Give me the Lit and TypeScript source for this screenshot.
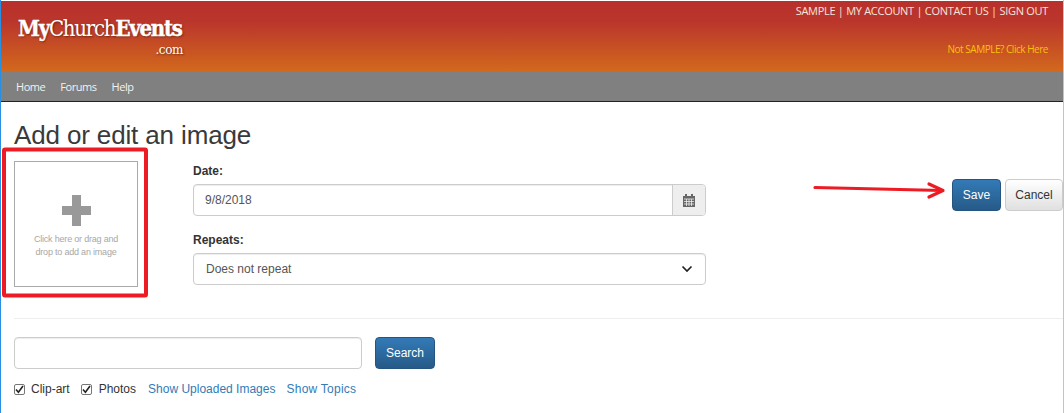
import { LitElement, html, css } from "lit";
import { customElement } from "lit/decorators.js";

@customElement("app-root")
export class AppRoot extends LitElement {
  static styles = css`
    :host { display: block; position: relative; width: 1064px; height: 413px; overflow: hidden; background: #fff; font-family: "Liberation Sans", Arial, sans-serif; color: #333; box-sizing: border-box; border-left: 1px solid #2a8fe0; border-right: 1px solid #c4c4c4; }
    * { box-sizing: border-box; }
    .top { height: 70px; margin-top: 1px; background: linear-gradient(#b8302c 0%, #ba362b 30%, #d2681d 100%); display: flex; justify-content: space-between; padding: 0 15px 0 17px; }
    .logo { padding-top: 16px; color: #fff; font-family: "DejaVu Serif", serif; line-height: 1; width: 166px; text-shadow: 1px 1px 2px rgba(60,20,0,.6); }
    .logo-main { font-size: 22px; letter-spacing: -1.25px; white-space: nowrap; font-weight: 400; font-stretch: condensed; }
    .logo-main b { font-weight: 700; -webkit-text-stroke: .4px #fff; }
    .logo-com { font-size: 12px; text-align: right; margin-top: 4px; letter-spacing: -.4px; padding-right: 1px; }
    .account { display: flex; flex-direction: column; align-items: flex-end; font-family: "Open Sans", "Noto Sans", sans-serif; }
    .links { font-size: 11px; color: #f4e4dc; padding-top: 2px; line-height: 16px; white-space: nowrap; letter-spacing: -.29px; }
    .notme { font-size: 10px; color: #fbbf0c; margin-top: 23px; line-height: 14px; letter-spacing: -.47px; }
    nav { height: 30px; background: #808080; display: flex; gap: 15px; align-items: center; padding-left: 15px; font-family: "Open Sans", "Noto Sans", sans-serif; font-size: 11px; color: #f2f2f2; letter-spacing: -.45px; }
    .rule { height: 1px; background: #222; }
    main { padding: 0 0 0 13px; }
    h1 { margin: 0; padding-top: 18px; font-weight: 400; font-size: 26px; line-height: 30px; color: #3a3a3a; letter-spacing: -.14px; height: 59px; }
    .editor { display: flex; height: 158px; border-bottom: 1px solid #eee; }
    .drop { width: 124px; height: 126px; border: 1px solid #a9a9a9; display: flex; flex-direction: column; align-items: center; color: #a8a8a8; font-size: 9px; letter-spacing: -.2px; line-height: 13px; padding-top: 33px; text-align: center; }
    .drop svg { display: block; margin-bottom: 7px; }
    .form { width: 513px; margin-left: 55px; }
    label.f { display: block; font-weight: 700; font-size: 12px; line-height: 16px; margin: 2px 0 5px; }
    .group { display: flex; height: 32px; border: 1px solid #ccc; border-radius: 4px; overflow: hidden; box-shadow: inset 0 1px 1px rgba(0,0,0,.075); }
    .group .val { flex: 1; padding-left: 11px; font-size: 12px; line-height: 30px; color: #555; }
    .addon { width: 33px; background: #eee; border-left: 1px solid #ccc; display: flex; align-items: center; justify-content: center; }
    .gap { height: 14px; }
    .select { justify-content: space-between; padding-right: 12px; align-items: center; }
    .select .val { padding-left: 12px; }
    .actions { margin-left: auto; display: flex; gap: 4px; align-items: flex-start; padding-top: 18px; }
    .btn { height: 32px; border-radius: 4px; font-size: 12px; display: flex; align-items: center; justify-content: center; }
    .primary { color: #fff; background: linear-gradient(#337ab7, #265a88); border: 1px solid #245580; }
    .save { width: 49px; }
    .cancel { width: 58px; color: #333; background: linear-gradient(#fff, #e0e0e0); border: 1px solid #ccc; }
    .search { display: flex; gap: 13px; padding-top: 18px; }
    .search .input { width: 348px; height: 32px; border: 1px solid #ccc; border-radius: 4px; box-shadow: inset 0 1px 1px rgba(0,0,0,.075); }
    .go { width: 60px; }
    .opts { display: flex; align-items: center; font-size: 12px; height: 16px; margin-top: 12px; }
    .cb { width: 11px; height: 11px; border: 1px solid #767676; border-radius: 2px; display: flex; margin-right: 6px; background: #fff; }
    .opts span { margin-right: 11px; }
    .opts .photos { margin-left: 1px; }
    .opts a { color: #337ab7; margin-left: 1px; margin-right: 11px; }
    .opts a + a { letter-spacing: .25px; margin-left: 0; }
    .anno { position: absolute; left: 0; top: 0; pointer-events: none; }
  `;

  render() {
    const check = html`<div class="cb"><svg width="9" height="9" viewBox="0 0 9 9"><path d="M1 4.5 L3.4 7.2 L8 1" fill="none" stroke="#222" stroke-width="1.6"/></svg></div>`;
    return html`
      <div class="top">
        <div class="logo">
          <div class="logo-main"><b>My</b>Church<b>Events</b></div>
          <div class="logo-com">.com</div>
        </div>
        <div class="account">
          <div class="links">SAMPLE | MY ACCOUNT | CONTACT US | SIGN OUT</div>
          <div class="notme">Not SAMPLE? Click Here</div>
        </div>
      </div>
      <nav><span>Home</span><span>Forums</span><span>Help</span></nav>
      <div class="rule"></div>
      <main>
        <h1>Add or edit an image</h1>
        <div class="editor">
          <div class="drop">
            <svg width="29" height="31" viewBox="0 0 29 31"><path d="M10 0h9v11h10v9H19v11h-9V20H0v-9h10z" fill="#999"/></svg>
            <div>Click here or drag and<br />drop to add an image</div>
          </div>
          <div class="form">
            <label class="f">Date:</label>
            <div class="group">
              <div class="val">9/8/2018</div>
              <div class="addon">
                <svg width="12" height="13" viewBox="0 0 12 13"><path d="M0 2h2V0h2v2h4V0h2v2h2v11H0z" fill="#666"/><path d="M1 5h10M1 7.500h10M1 10h10M3.500 5v7M6 5v7M8.500 5v7" stroke="#eee" stroke-width=".8"/></svg>
              </div>
            </div>
            <div class="gap"></div>
            <label class="f">Repeats:</label>
            <div class="group select">
              <div class="val">Does not repeat</div>
              <svg width="12" height="8" viewBox="0 0 12 8"><path d="M1.500 1.500 L6 6 L10.500 1.500" fill="none" stroke="#222" stroke-width="1.700"/></svg>
            </div>
          </div>
          <div class="actions">
            <div class="btn primary save">Save</div>
            <div class="btn cancel">Cancel</div>
          </div>
        </div>
        <div class="search">
          <div class="input"></div>
          <div class="btn primary go">Search</div>
        </div>
        <div class="opts">
          ${check}<span>Clip-art</span>${check}<span class="photos">Photos</span>
          <a>Show Uploaded Images</a><a>Show Topics</a>
        </div>
      </main>
      <svg class="anno" width="1063" height="413" viewBox="1 0 1063 413">
        <rect x="4" y="149.500" width="142" height="146" fill="none" stroke="#ed1c24" stroke-width="4" rx="1"/>
        <path d="M815 187.500 L942 190.500" stroke="#ed1c24" stroke-width="3.200" stroke-linecap="round" fill="none"/>
        <path d="M929 184 L943 190.500 L929 197" stroke="#ed1c24" stroke-width="3.200" stroke-linecap="round" stroke-linejoin="round" fill="none"/>
      </svg>
    `;
  }
}
